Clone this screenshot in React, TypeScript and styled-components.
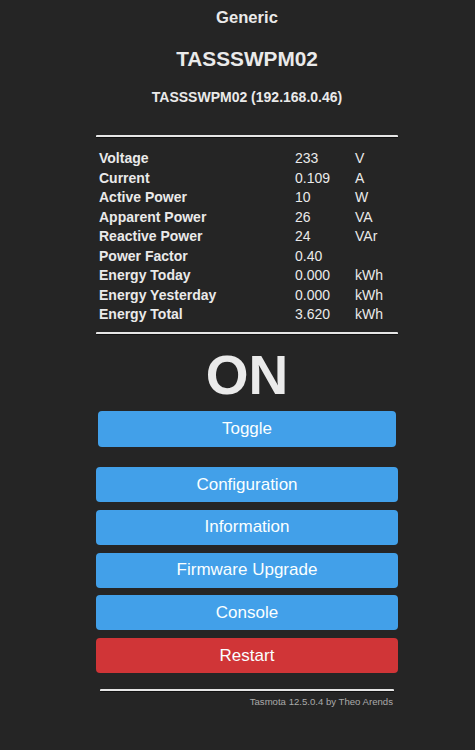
import React from 'react';
import styled, { createGlobalStyle } from 'styled-components';

const GlobalStyle = createGlobalStyle`
  html, body {
    margin: 0;
    padding: 0;
    background: #252525;
  }
  body {
    font-family: 'Liberation Sans', Arial, sans-serif;
    color: #eaeaea;
  }
`;

interface Reading {
  label: string;
  value: string;
  unit: string;
}

const readings: Reading[] = [
  { label: 'Voltage', value: '233', unit: 'V' },
  { label: 'Current', value: '0.109', unit: 'A' },
  { label: 'Active Power', value: '10', unit: 'W' },
  { label: 'Apparent Power', value: '26', unit: 'VA' },
  { label: 'Reactive Power', value: '24', unit: 'VAr' },
  { label: 'Power Factor', value: '0.40', unit: '' },
  { label: 'Energy Today', value: '0.000', unit: 'kWh' },
  { label: 'Energy Yesterday', value: '0.000', unit: 'kWh' },
  { label: 'Energy Total', value: '3.620', unit: 'kWh' },
];

const menu = ['Configuration', 'Information', 'Firmware Upgrade', 'Console'];

const Page = styled.div`
  display: flex;
  justify-content: center;
  padding-left: 19px;
`;

const Column = styled.div`
  width: 302px;
  display: flex;
  flex-direction: column;
`;

const Header = styled.div`
  text-align: center;
  padding-top: 8px;
`;

const Module = styled.div`
  font-size: 16.6px;
  line-height: 20px;
  font-weight: bold;
`;

const DeviceName = styled.h2`
  margin: 17.5px 0 0;
  font-size: 20.8px;
  line-height: 25px;
  font-weight: bold;
`;

const Host = styled.h4`
  margin: 18px 0 0;
  font-size: 14px;
  line-height: 17px;
  font-weight: bold;
`;

const Rule = styled.hr<{ $top: number; $inset?: number }>`
  margin: ${p => p.$top}px ${p => p.$inset ?? 0}px 0;
  height: 0;
  border: 0;
  border-top: 2px solid #e6e6e6;
  border-bottom: 1px solid #111;
  border-radius: 1px;
`;

const Sensors = styled.div`
  margin-top: 10.25px;
  padding-left: 3px;
  display: grid;
  grid-template-columns: 196px 60px 1fr;
  grid-auto-rows: 19.5px;
  align-items: center;
  font-size: 14px;
`;

const Label = styled.span`
  font-weight: bold;
`;

const Cell = styled.span``;

const State = styled.div`
  margin-top: 10px;
  text-align: center;
  font-size: 55px;
  line-height: 60px;
  font-weight: bold;
`;

const Button = styled.button<{ $danger?: boolean }>`
  display: block;
  width: 100%;
  height: 35px;
  border: 0;
  border-radius: 4px;
  padding: 0;
  background: ${p => (p.$danger ? '#d03537' : '#42a0e9')};
  color: #faffff;
  font-family: 'Liberation Sans', Arial, sans-serif;
  font-size: 17px;
  cursor: pointer;
`;

const ToggleButton = styled(Button)`
  width: 298px;
  height: 36px;
  margin: 6px 2px 0;
`;

const Menu = styled.div`
  margin-top: 20px;
  display: flex;
  flex-direction: column;
  gap: 7.75px;
`;

const Footer = styled.div`
  margin-top: 16px;
  display: flex;
  flex-direction: column;
`;

const Credit = styled.div`
  margin: 4px 5px 0 0;
  text-align: right;
  font-size: 9.6px;
  line-height: 12px;
  color: #aaa;
`;

const App: React.FC = () => {
  return (
    <>
      <GlobalStyle />
      <Page>
        <Column>
          <Header>
            <Module>Generic</Module>
            <DeviceName>TASSSWPM02</DeviceName>
            <Host>TASSSWPM02 (192.168.0.46)</Host>
          </Header>

          <Rule $top={29.5} />
          <Sensors>
            {readings.map(r => (
              <React.Fragment key={r.label}>
                <Label>{r.label}</Label>
                <Cell>{r.value}</Cell>
                <Cell>{r.unit}</Cell>
              </React.Fragment>
            ))}
          </Sensors>
          <Rule $top={8.25} />

          <State>ON</State>
          <ToggleButton>Toggle</ToggleButton>

          <Menu>
            {menu.map(item => (
              <Button key={item}>{item}</Button>
            ))}
            <Button $danger>Restart</Button>
          </Menu>

          <Footer>
            <Rule $top={0} $inset={4} />
            <Credit>Tasmota 12.5.0.4 by Theo Arends</Credit>
          </Footer>
        </Column>
      </Page>
    </>
  );
};

export default App;
